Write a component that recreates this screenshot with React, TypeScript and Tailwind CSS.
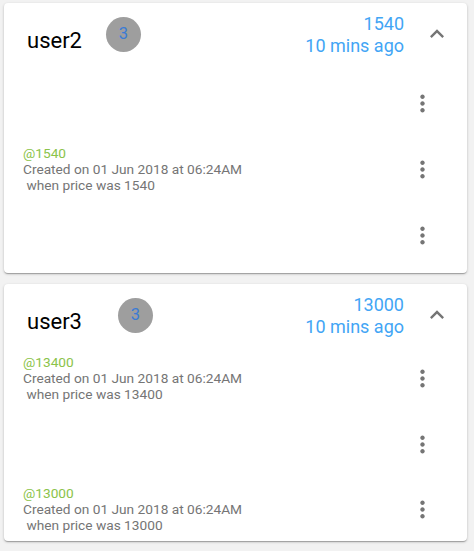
import React from "react";

const MoreVert = () => (
  <svg width="27" height="27" viewBox="0 0 24 24" fill="#757575">
    <path d="M12 8c1.1 0 2-.9 2-2s-.9-2-2-2-2 .9-2 2 .9 2 2 2zm0 2c-1.1 0-2 .9-2 2s.9 2 2 2 2-.9 2-2-.9-2-2-2zm0 6c-1.1 0-2 .9-2 2s.9 2 2 2 2-.9 2-2-.9-2-2-2z" />
  </svg>
);

const ExpandLess = () => (
  <svg width="28" height="28" viewBox="0 0 24 24" fill="#757575">
    <path d="M12 8l-6 6 1.41 1.41L12 10.83l4.59 4.58L18 14z" />
  </svg>
);

type Entry = { price?: string; h: string };

function Item({ price, h }: Entry) {
  return (
    <div className={`flex items-center pl-[19px] pr-[31px] ${h}`}>
      <div className="flex-1 text-[13.7px] leading-[16px]">
        {price && (
          <>
            <div className="text-[#8bc34a]">@{price}</div>
            <div className="text-[#757575]">Created on 01 Jun 2018 at 06:24AM</div>
            <div className="text-[#757575]">{"\u00a0"}when price was {price}</div>
          </>
        )}
      </div>
      <MoreVert />
    </div>
  );
}

function Card({
  user,
  price,
  nameW,
  headerH,
  items,
  bottomPad,
}: {
  user: string;
  price: string;
  nameW: string;
  headerH: string;
  items: Entry[];
  bottomPad: string;
}) {
  return (
    <div
      className={`w-[463px] bg-white rounded-[4px] shadow-[0_1px_3px_0_rgba(0,0,0,0.2),0_1px_1px_0_rgba(0,0,0,0.14),0_2px_1px_-1px_rgba(0,0,0,0.12)] ${bottomPad}`}
    >
      <div className={`flex items-start pl-[23px] pr-[16px] ${headerH}`}>
        <div className={`mt-[25px] text-[22px] leading-[26px] text-black ${nameW}`}>{user}</div>
        <div className="mt-[14px] w-[35px] h-[35px] rounded-full bg-[#9e9e9e] flex items-center justify-center text-[16.5px] text-[#3a7bd5]">
          3
        </div>
        <div className="flex-1" />
        <div className="mt-[10px] text-right text-[18px] leading-[22px] text-[#42a5f5]">
          <div>{price}</div>
          <div>10 mins ago</div>
        </div>
        <div className="mt-[17px] ml-[19px]">
          <ExpandLess />
        </div>
      </div>
      {items.map((it, i) => (
        <Item key={i} {...it} />
      ))}
    </div>
  );
}

export default function App() {
  return (
    <div className="w-[474px] min-h-[551px] bg-[#f2f2f2] pt-[3px] pl-[4px] font-['Roboto',sans-serif]">
      <Card
        user="user2"
        price="1540"
        nameW="w-[79px]"
        headerH="h-[67px]"
        bottomPad="pb-[5px]"
        items={[{ h: "h-[66px]" }, { price: "1540", h: "h-[66px]" }, { h: "h-[66px]" }]}
      />
      <div className="h-[11px]" />
      <Card
        user="user3"
        price="13000"
        nameW="w-[91px]"
        headerH="h-[61px]"
        bottomPad="pb-0"
        items={[
          { price: "13400", h: "h-[66px]" },
          { h: "h-[66px]" },
          { price: "13000", h: "h-[64px]" },
        ]}
      />
    </div>
  );
}
